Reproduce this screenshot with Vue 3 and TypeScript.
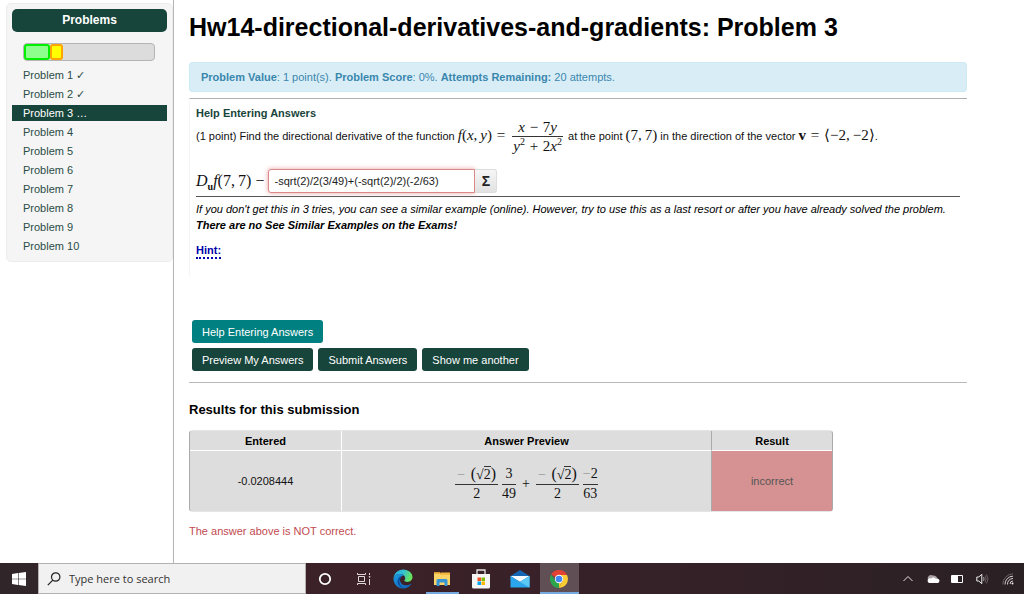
<script setup lang="ts">
import { ref } from 'vue'

interface ProblemLink {
  id: number
  mark: string
}

const current = 3
const problems: ProblemLink[] = Array.from({ length: 10 }, (_, i) => ({
  id: i + 1,
  mark: i < 2 ? '✓' : i + 1 === current ? '…' : '',
}))
const answer = ref('-sqrt(2)/2(3/49)+(-sqrt(2)/2)(-2/63)')
const query = ref('')
const secondFactors = [
  { top: '3', bottom: '49', negative: false },
  { top: '2', bottom: '63', negative: true },
]
</script>

<template>
  <div class="screen">
    <div class="page">
      <aside class="sidebar">
        <nav class="panel" aria-label="Problems">
          <h2 class="panel-title">Problems</h2>
          <div class="progress"><span class="done"></span><span class="active"></span></div>
          <ul class="problems">
            <li v-for="p in problems" :key="p.id">
              <a href="#" :class="{ current: p.id === current }">Problem {{ p.id }} {{ p.mark }}</a>
            </li>
          </ul>
        </nav>
      </aside>

      <main class="content">
        <h1>Hw14-directional-derivatives-and-gradients: Problem 3</h1>
        <div class="alert">
          <b>Problem Value</b>: 1 point(s). <b>Problem Score</b>: 0%. <b>Attempts Remaining:</b> 20 attempts.
        </div>

        <section class="problem">
          <a class="help-link" href="#">Help Entering Answers</a>
          <p class="statement">
            (1 point) Find the directional derivative of the function
            <span class="math"><i>f</i>(<i>x</i>,&thinsp;<i>y</i>) <span class="rel">=</span>
              <span class="frac">
                <span class="num"><i>x</i> <span class="op">−</span> 7<i>y</i></span>
                <span class="den"><i>y</i><sup>2</sup> <span class="op">+</span> 2<i>x</i><sup>2</sup></span>
              </span></span>
            at the point <span class="math">(7,&thinsp;7)</span> in the direction of the vector
            <span class="math"><b>v</b> <span class="rel">=</span> ⟨−2,&thinsp;−2⟩</span>.
          </p>
          <div class="answer-row">
            <label class="math lhs" for="answer"><i>D</i><sub>u</sub><i>f</i>(7,&thinsp;7) −</label>
            <input id="answer" v-model="answer" class="answer" type="text" spellcheck="false" />
            <button class="sigma" type="button" aria-label="Equation editor">Σ</button>
          </div>
          <div class="note">
            <p>If you don't get this in 3 tries, you can see a similar example (online). However, try to use this as a last resort or after you have already solved the problem.</p>
            <p><b>There are no See Similar Examples on the Exams!</b></p>
          </div>
          <a class="hint" href="#">Hint:</a>
        </section>

        <div class="actions">
          <div><button class="btn teal" type="button">Help Entering Answers</button></div>
          <div class="action-row">
            <button class="btn" type="button">Preview My Answers</button>
            <button class="btn" type="button">Submit Answers</button>
            <button class="btn" type="button">Show me another</button>
          </div>
        </div>

        <section class="results">
          <h3>Results for this submission</h3>
          <table>
            <colgroup><col class="c1" /><col /><col class="c3" /></colgroup>
            <thead>
              <tr><th>Entered</th><th>Answer Preview</th><th>Result</th></tr>
            </thead>
            <tbody>
              <tr>
                <td>-0.0208444</td>
                <td>
                  <span class="math preview">
                    <template v-for="(f, i) in secondFactors" :key="f.bottom">
                      <span v-if="i" class="plus">+</span>
                      <span class="frac">
                        <span class="num root"><span class="faint">−</span> <span class="paren">(</span>√<span class="radicand">2</span><span class="paren">)</span></span>
                        <span class="den">2</span>
                      </span>
                      <span class="frac">
                        <span class="num"><span v-if="f.negative" class="faint">−</span>{{ f.top }}</span>
                        <span class="den">{{ f.bottom }}</span>
                      </span>
                    </template>
                  </span>
                </td>
                <td class="incorrect">incorrect</td>
              </tr>
            </tbody>
          </table>
          <p class="verdict">The answer above is NOT correct.</p>
        </section>
      </main>
    </div>

    <footer class="taskbar">
      <button class="start" type="button" aria-label="Start">
        <svg width="14" height="14" viewBox="0 0 14 14" fill="#fff">
          <path d="M0 2l6-.9v5.600H0zM6.600 1L14 0v6.700H6.600zM0 7.300h6v5.600L0 12zM6.600 7.300H14V14l-7.400-1z" />
        </svg>
      </button>
      <label class="search">
        <svg width="14" height="14" viewBox="0 0 14 14" fill="none" stroke="#222" stroke-width="1.2">
          <circle cx="8.700" cy="5" r="4.200" /><path d="M5.800 8.200L.8 13.200" />
        </svg>
        <input v-model="query" type="text" placeholder="Type here to search" aria-label="Type here to search" />
      </label>
      <div class="apps">
        <button type="button" aria-label="Cortana">
          <svg width="14" height="14" viewBox="0 0 14 14"><circle cx="7" cy="7" r="5.200" fill="none" stroke="#fff" stroke-width="1.800" /></svg>
        </button>
        <button type="button" aria-label="Task View">
          <svg width="14" height="14" viewBox="0 0 14 14" fill="none" stroke="#e0d8da" stroke-width="1">
            <path d="M.5 1v1.500h8V1M.5 13v-1.500h8V13M1.500 4.500h6v5h-6zM12.500 1v2M12.500 7v6" /><path d="M11.800 4.800h1.500" stroke-width="1.500" />
          </svg>
        </button>
        <button type="button" aria-label="Edge">
          <svg width="20" height="20" viewBox="0 0 20 20">
            <defs>
              <linearGradient id="edge-a" x1="0" y1="0" x2="1" y2=".3"><stop offset="0" stop-color="#22a8e8" /><stop offset=".55" stop-color="#35c1cf" /><stop offset="1" stop-color="#67e45d" /></linearGradient>
              <linearGradient id="edge-b" x1="0" y1="0" x2=".7" y2="1"><stop offset="0" stop-color="#1a9be0" /><stop offset="1" stop-color="#1267bd" /></linearGradient>
            </defs>
            <path d="M.5 9.500C1 4 5 .5 10.200.5c5.500 0 9.300 3.700 9.300 7.600 0 3-2.400 4.900-5 4.900-2 0-3.200-.8-3.200-1.500 0-.6.9-.9.9-2.300C12.200 7 10 5 7 5 3.700 5 1.400 6.900.5 9.500z" fill="url(#edge-a)" />
            <path d="M.5 9.500C1.400 6.900 3.700 5 7 5c1.500 0 3 .6 3.900 1.500C8.700 6.600 7 8.500 7 11c0 3 2.600 5.300 6 5.300 2 0 3.400-.7 4.700-1.600.5-.2.700.2.400.6C16.500 18 13.500 19.600 10 19.500 4.500 19.300.3 15 .5 9.500z" fill="url(#edge-b)" />
            <path d="M7.200 9.600C5.400 12.800 7 17.800 11.500 19.300 8 18.700 4.600 16 4.600 12.500c0-2.600 1.500-4.600 3.900-5.500-.6.700-1 1.500-1.300 2.600z" fill="#0c4b9c" />
          </svg>
        </button>
        <button class="open inset" type="button" aria-label="File Explorer">
          <svg width="18" height="16" viewBox="0 0 18 16">
            <path d="M1 1h6l1 2H1z" fill="#d89a24" /><path d="M1 2.500h16V14H1z" fill="#fbd468" /><path d="M8 1.500h9V4H7z" fill="#f3b83c" />
            <path d="M3.500 15V9.500a1.500 1.500 0 0 1 1.500-1.500h8a1.500 1.500 0 0 1 1.500 1.500V15h-3v-3.500h-5V15z" fill="#3795d6" />
          </svg>
        </button>
        <button type="button" aria-label="Microsoft Store">
          <svg width="20" height="20" viewBox="0 0 20 20">
            <path d="M6 6V1h8v5" fill="none" stroke="#e6e4e4" stroke-width="1.300" /><path d="M1 5h18v13a1.500 1.500 0 0 1-1.500 1.500h-15A1.500 1.500 0 0 1 1 18z" fill="#f6f5f5" />
            <path d="M6.500 8.500H10V12H6.500z" fill="#f25022" /><path d="M10.500 8.500H14V12h-3.500z" fill="#7fba00" /><path d="M6.500 12.500H10V16H6.500z" fill="#00a4ef" /><path d="M10.500 12.500H14V16h-3.500z" fill="#ffb900" />
          </svg>
        </button>
        <button type="button" aria-label="Mail">
          <svg width="20" height="20" viewBox="0 0 20 20">
            <path d="M.5 7L10 1l9.500 6v4H.5z" fill="#1565b5" /><path d="M.5 7h19L10 13z" fill="#f4f9fd" />
            <path d="M.5 7l9.500 6L19.500 7v11.500H.5z" fill="#2aa7ec" /><path d="M10 13L19.500 7v11.500z" fill="#5bc8f5" />
          </svg>
        </button>
        <button class="open focused" type="button" aria-label="Chrome">
          <svg width="18" height="18" viewBox="0 0 18 18">
            <path d="M9 9L1.200 4.500A9 9 0 0 1 16.800 4.500z" fill="#e34133" /><path d="M9 5h7.990A9 9 0 0 1 9 18l3.500-7z" fill="#fccc34" />
            <path d="M1.200 4.500L5.500 11 9 13.200V18A9 9 0 0 1 1.200 4.500z" fill="#2da44e" /><path d="M9 13l3.500-2L9 18z" fill="#fccc34" />
            <circle cx="9" cy="9" r="4.200" fill="#fff" /><circle cx="9" cy="9" r="3.300" fill="#4285f4" />
          </svg>
        </button>
      </div>
      <div class="tray">
        <button type="button" aria-label="Show hidden icons"><svg width="12" height="12" viewBox="0 0 12 12"><path d="M1.500 8L6 3.500 10.500 8" fill="none" stroke="#e8e4e5" stroke-width="1" /></svg></button>
        <button type="button" aria-label="OneDrive"><svg width="14" height="12" viewBox="0 0 14 12"><path d="M2 7a3.500 3.500 0 0 1 5-4.500A4 4 0 0 1 11.500 6z" fill="#aaa3a5" /><path d="M3 10a2.500 2.500 0 0 1 0-4.500c1-.3 1.500 0 2 .2a3 3 0 0 1 5 .3A2.200 2.200 0 1 1 11.500 10z" fill="#fff" /></svg></button>
        <button type="button" aria-label="Battery"><svg width="13" height="12" viewBox="0 0 13 12"><path d="M.5 2.500h11v7H.5z" fill="none" stroke="#fff" /><path d="M1 3h6v6H1z" fill="#fff" /></svg></button>
        <button type="button" aria-label="Volume"><svg width="13" height="12" viewBox="0 0 13 12" fill="none"><path d="M.8 4h2l3-2.700v9.400L2.800 8h-2z" stroke="#eee" /><path d="M7.500 4.200q1.200 1.800 0 3.600" stroke="#aaa" /><path d="M9 2.700q2.300 3.300 0 6.600M10.500 1.500q3 4.500 0 9" stroke="#665b5e" /></svg></button>
        <button type="button" aria-label="Wi-Fi"><svg width="12" height="12" viewBox="0 0 12 12" fill="none"><path d="M8 11a3 3 0 0 1 3-3M5.500 11.500A5.500 5.500 0 0 1 11 5.500M3 11.500A8 8 0 0 1 11 3.200" stroke="#d5cfd1" /><path d="M.8 11.500A10.500 10.500 0 0 1 11 .8" stroke="#6d6265" /><circle cx="10.500" cy="10.500" r="1" fill="#eee" /></svg></button>
      </div>
    </footer>
  </div>
</template>

<style>
body {
  margin: 0;
  background: #fff;
}
</style>

<style scoped>
* {
  box-sizing: border-box;
}
.screen {
  display: flex;
  flex-direction: column;
  min-height: 100vh;
  font: 11px/16px "Liberation Sans", Arial, sans-serif;
  color: #111;
}
h1, h2, h3, p, ul {
  margin: 0;
  padding: 0;
}
button, input {
  font: inherit;
  margin: 0;
}
.page {
  flex: 1;
  display: flex;
}
.sidebar {
  flex: 0 0 174px;
  padding: 3px 0 0 6px;
  border-right: 1px solid #b5b5b5;
}
.panel {
  padding: 5px 5px 4px;
  border: 1px solid #ececec;
  border-radius: 5px;
  background: #f5f5f5;
}
.panel-title {
  border-radius: 5px;
  background: #18453b;
  color: #fff;
  font-size: 12px;
  line-height: 23px;
  text-align: center;
}
.progress {
  display: flex;
  height: 18px;
  margin: 11px 12px 6px 11px;
  border: 1px solid #b5b5b5;
  border-radius: 4px;
  background: #dcdcdc;
}
.progress span {
  border: 2px solid #00f000;
  border-radius: 3px;
}
.done {
  width: 20%;
  background: #8cff8c;
}
.progress .active {
  width: 10%;
  border-color: #ffa500;
  background: #ff0;
}
.problems {
  list-style: none;
}
.problems li {
  padding-bottom: 3px;
}
.problems a {
  display: block;
  padding-left: 11px;
  color: #2a4d45;
  text-decoration: none;
}
.problems a.current {
  background: #18453b;
  color: #fff;
}
.content {
  flex: 1;
  min-width: 0;
  padding: 11px 57px 12px 15px;
}
h1 {
  color: #000;
  font-size: 25px;
  line-height: 32px;
}
.alert {
  margin-top: 19px;
  padding: 6px 11px;
  border: 1px solid #cdebf2;
  border-radius: 3px;
  background: #d9edf7;
  color: #3a87ad;
}
.problem {
  margin-top: 6px;
  padding: 8px 7px 18px 6px;
  border-top: 1px solid #b0b0b0;
  border-left: 1px solid #f6f6f6;
}
.help-link {
  display: block;
  color: #18453b;
  font-weight: bold;
  line-height: 12px;
  text-decoration: none;
}
.math {
  font-family: "Liberation Serif", "Times New Roman", serif;
  font-size: 15px;
  white-space: nowrap;
}
.rel {
  margin: 0 1px;
}
.op {
  margin: 0 1px;
}
.frac {
  display: inline-flex;
  flex-direction: column;
  align-items: center;
  vertical-align: middle;
  line-height: 18px;
}
.num {
  align-self: stretch;
  border-bottom: 1px solid #333;
  text-align: center;
}
.den sup {
  font-size: 10px;
  line-height: 1px;
}
.statement .frac {
  margin: 0 2px 0 6px;
}
.statement .num {
  line-height: 17px;
}
.statement .den {
  padding: 0 1px;
}
.answer-row {
  display: flex;
  align-items: center;
  margin-top: 14px;
  padding-bottom: 3px;
  border-bottom: 1px solid #555;
}
.lhs {
  margin-right: 4px;
  font-size: 16px;
}
.lhs sub {
  font-size: 10px;
  font-weight: bold;
  line-height: 1px;
}
.answer {
  width: 207px;
  height: 24px;
  padding: 0 5px;
  border: 1px solid #d88;
  border-radius: 3px 0 0 3px;
  outline: none;
  box-shadow: 0 0 5px #e8a0a0;
  background: #fff;
  color: #222;
}
.sigma {
  width: 22px;
  height: 24px;
  padding: 0;
  border: 1px solid #ddd;
  border-left: 0;
  border-radius: 0 3px 3px 0;
  background: linear-gradient(#f6f6f6, #e2e2e2);
  color: #222;
  font-size: 14px;
  font-weight: bold;
}
.note {
  padding-top: 4px;
  color: #000;
  font-style: italic;
}
.hint {
  display: inline-block;
  margin-top: 11px;
  border-bottom: 2px dotted #00a;
  color: #00a;
  font-weight: bold;
  line-height: 13px;
  text-decoration: none;
}
.actions {
  padding: 43px 3px 11px;
  border-bottom: 1px solid #b8b8b8;
}
.action-row {
  display: flex;
  flex-wrap: wrap;
  gap: 5px;
  margin-top: 5px;
}
.btn {
  display: block;
  height: 23px;
  padding: 0 10px;
  border: 0;
  border-radius: 3px;
  background: #18453b;
  color: #fff;
}
.btn.teal {
  background: #008080;
}
h3 {
  margin-top: 19px;
  color: #000;
  font-size: 13px;
  line-height: 16px;
}
table {
  width: 644px;
  max-width: 100%;
  margin-top: 12px;
  border: 1px solid #aaa;
  border-top-color: #e5e5e5;
  border-bottom-color: #e5e5e5;
  border-radius: 4px;
  border-spacing: 0;
  table-layout: fixed;
  background: #ddd;
}
.c1 {
  width: 151px;
}
.c3 {
  width: 121px;
}
th, td {
  padding: 0;
  border-left: 1px solid #fff;
  text-align: center;
}
th:first-child, td:first-child {
  border-left: 0;
}
th:last-child, td:last-child {
  border-left-color: #aaa;
}
th {
  height: 20px;
  border-bottom: 1px solid #fff;
  color: #000;
}
td {
  height: 60px;
}
.incorrect {
  background: #d69292;
  color: #555;
}
.preview {
  display: inline-flex;
  align-items: center;
  gap: 4px;
  padding-top: 5px;
  font-size: 14px;
}
.preview .num {
  height: 20px;
}
.root {
  padding: 0 2px;
}
.root .faint {
  margin-right: 2px;
}
.plus {
  margin: 0 2px;
}
.faint {
  color: #999;
}
.radicand {
  border-top: 1px solid #333;
}
.paren {
  font-size: 16px;
}
.verdict {
  margin-top: 11px;
  color: #c24a50;
}
.taskbar {
  display: flex;
  height: 31px;
  background: linear-gradient(90deg, #30262a, #3c2128 35%, #352128 65%, #2a2124);
}
.taskbar button {
  display: flex;
  align-items: center;
  justify-content: center;
  padding: 0;
  border: 0;
  background: none;
}
.taskbar .start {
  width: 38px;
}
.search {
  display: flex;
  align-items: center;
  gap: 8px;
  width: 268px;
  padding-left: 8px;
  border: 1px solid #b5b1b2;
  background: #f1f1f1;
}
.search input {
  flex: 1;
  min-width: 0;
  padding: 0;
  border: 0;
  outline: 0;
  background: none;
  font: 11px/16px "Open Sans", "Noto Sans", sans-serif;
}
.search input::placeholder {
  color: #333;
  opacity: 1;
}
.apps {
  display: flex;
}
.apps button {
  width: 39px;
  padding-right: 1px;
}
.apps .open {
  box-shadow: inset 0 -2px #76a9dc;
}
.apps .inset {
  width: 33px;
  margin: 0 3px;
}
.apps .focused {
  background: #604f54;
}
.tray {
  display: flex;
  margin-left: auto;
  padding-right: 4px;
}
.tray button {
  width: 25px;
}
</style>
